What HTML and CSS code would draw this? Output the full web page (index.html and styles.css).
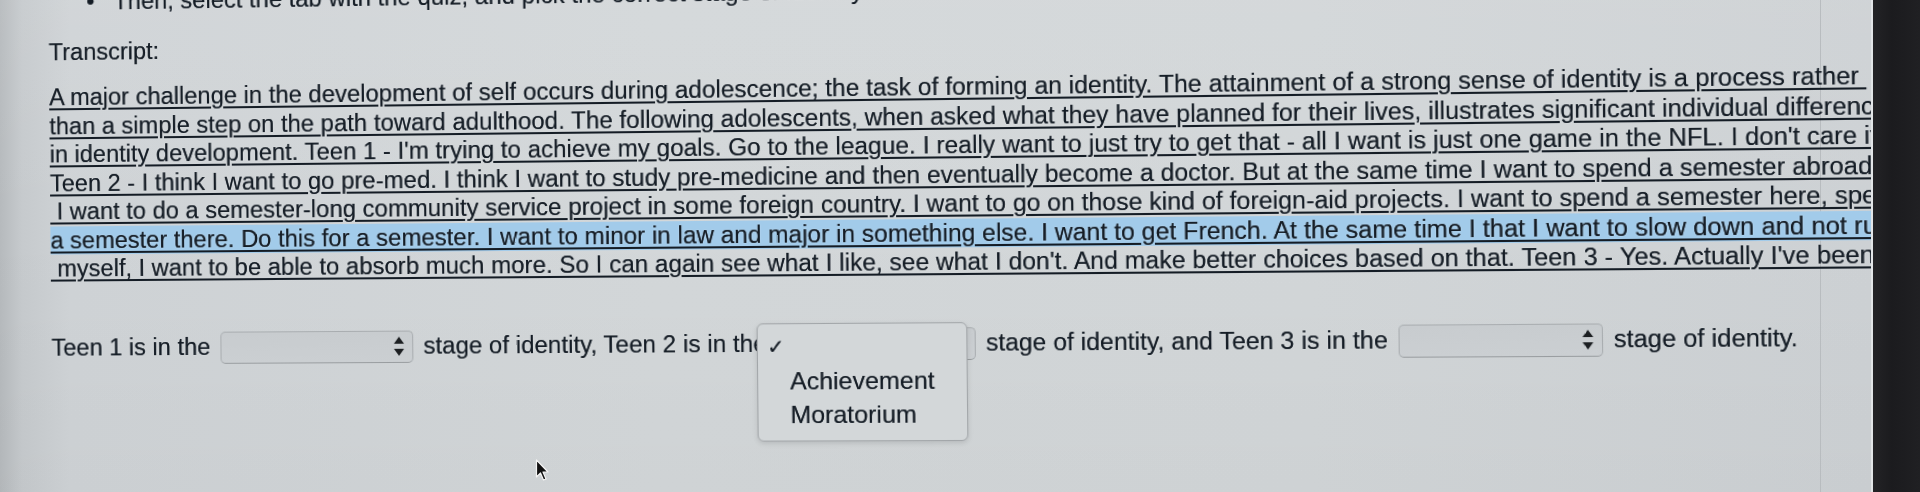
FILE: index.html
```html
<!DOCTYPE html>
<html lang="en">
<head>
<meta charset="utf-8">
<title>Transcript quiz</title>
<link rel="stylesheet" href="styles.css">
</head>
<body>
<div class="screen">
  <div class="page">
    <span class="track-line"></span>
    <div class="content">
      <ul class="steps">
        <li>Then, select the tab with the quiz, and pick the correct stage of identity for each teen.</li>
      </ul>
      <p class="label">Transcript:</p>
      <div class="transcript">
        <div class="line">A major challenge in the development of self occurs during adolescence; the task of forming an identity. The attainment of a strong sense of identity is a process rather </div>
        <div class="line">than a simple step on the path toward adulthood. The following adolescents, when asked what they have planned for their lives, illustrates significant individual differences</div>
        <div class="line">in identity development. Teen 1 - I'm trying to achieve my goals. Go to the league. I really want to just try to get that - all I want is just one game in the NFL. I don't care if</div>
        <div class="line">Teen 2 - I think I want to go pre-med. I think I want to study pre-medicine and then eventually become a doctor. But at the same time I want to spend a semester abroad</div>
        <div class="line"> I want to do a semester-long community service project in some foreign country. I want to go on those kind of foreign-aid projects. I want to spend a semester here, spend</div>
        <div class="line selected">a semester there. Do this for a semester. I want to minor in law and major in something else. I want to get French. At the same time I that I want to slow down and not rush</div>
        <div class="line"> myself, I want to be able to absorb much more. So I can again see what I like, see what I don't. And make better choices based on that. Teen 3 - Yes. Actually I've been</div>
      </div>
      <div class="quiz">
        <span class="txt">Teen 1 is in the</span>
        <span class="select-wrap">
          <span class="select"></span>
          <svg class="arrows" viewBox="0 0 10 22" width="10" height="22"><path d="M5 1 L10 8 L0 8 Z M0 13 L10 13 L5 20 Z" fill="#1c1f22"/></svg>
        </span>
        <span class="txt">stage of identity, Teen 2 is in the</span>
        <span class="select-wrap">
          <span class="select"></span>
          <svg class="arrows" viewBox="0 0 10 22" width="10" height="22"><path d="M5 1 L10 8 L0 8 Z M0 13 L10 13 L5 20 Z" fill="#1c1f22"/></svg>
          <span class="popup">
            <span class="opt"><span class="check">✓</span></span>
            <span class="opt">Achievement</span>
            <span class="opt">Moratorium</span>
          </span>
        </span>
        <span class="txt">stage of identity, and Teen 3 is in the</span>
        <span class="select-wrap">
          <span class="select"></span>
          <svg class="arrows" viewBox="0 0 10 22" width="10" height="22"><path d="M5 1 L10 8 L0 8 Z M0 13 L10 13 L5 20 Z" fill="#1c1f22"/></svg>
        </span>
        <span class="txt">stage of identity.</span>
      </div>
    </div>
    <svg class="cursor" viewBox="0 0 14 23" width="14" height="23"><path d="M1.5 1 L1.5 18 L5.5 14 L8.5 21 L11 20 L8 13 L13 13 Z" fill="#111" stroke="#f4f4f4" stroke-width="1.2" stroke-linejoin="round"/></svg>
  </div>
  <div class="bezel"></div>
</div>
</body>
</html>
```

FILE: styles.css
```css
html, body {
  margin: 0;
  padding: 0;
}
body {
  width: 1920px;
  height: 492px;
  overflow: hidden;
  font-family: "Liberation Sans", Arial, sans-serif;
  color: #141c25;
}
.screen {
  display: flex;
  height: 492px;
}
.page {
  flex: 1;
  position: relative;
  overflow: hidden;
  background:
    linear-gradient(180deg, rgba(255,255,255,0.06) 0, rgba(255,255,255,0) 45%, rgba(0,0,0,0.02) 100%),
    linear-gradient(90deg, #b6babd 0, #c6cacd 22px, #cfd3d6 70px, #d3d7d9 35%, #d2d6d8 70%, #cdd1d4 100%);
}
.track-line {
  position: absolute;
  left: 1820px;
  top: 0;
  bottom: 0;
  width: 1px;
  background: #b8bcbf;
}
.content {
  padding-left: 50px;
  transform: perspective(2000px) rotateY(-2.9deg) rotateZ(-0.55deg);
  transform-origin: 0 200px;
  font-size: 23.5px;
  line-height: 28.5px;
  text-shadow: 0 0 0.6px rgba(20,28,37,0.7), 0 0 1.5px rgba(255,255,255,0.5);
}
.steps {
  margin: -11px 0 0 0;
  padding: 0 0 0 38px;
  list-style: none;
}
.steps li {
  white-space: nowrap;
}
.steps li::before {
  content: "•";
  display: inline-block;
  width: 27px;
}
.label {
  margin: 21px 0 0 0;
}
.transcript {
  margin-top: 17px;
}
.line {
  white-space: pre;
  text-decoration: underline;
  text-decoration-thickness: 1.6px;
  text-underline-offset: 3px;
  margin-right: -400px;
}
.line.selected {
  background: #a2cbea;
}
.quiz {
  margin-top: 48px;
  height: 34px;
  display: flex;
  align-items: center;
  white-space: nowrap;
}
.txt {
  display: inline-block;
}
.select-wrap {
  position: relative;
  display: inline-block;
  width: 190px;
  height: 32px;
  margin: 0 10px 0 10px;
}
.select {
  display: block;
  box-sizing: border-box;
  width: 190px;
  height: 32px;
  border: 1px solid #a9adb0;
  border-bottom-color: #999da0;
  border-radius: 5px;
  background: linear-gradient(180deg, #c8cccf, #cbcfd2);
}
.arrows {
  position: absolute;
  right: 9px;
  top: 5px;
}
.popup {
  position: absolute;
  left: -20px;
  top: -5px;
  width: 202px;
  box-sizing: border-box;
  padding: 6px 0 9px 0;
  display: flex;
  flex-direction: column;
  background: #d3d7d9;
  border: 1px solid #a2a6a9;
  border-radius: 6px;
  box-shadow: 0 2px 5px rgba(0,0,0,0.12);
  font-size: 24px;
  line-height: 33px;
  z-index: 2;
}
.opt {
  display: block;
  height: 33px;
  padding-left: 31px;
  position: relative;
}
.check {
  position: absolute;
  left: 9px;
  top: 0;
  font-size: 20px;
}
.cursor {
  position: absolute;
  left: 535px;
  top: 459px;
}
.bezel {
  width: 47px;
  border-left: 2px solid #e2e5e7;
  background: linear-gradient(90deg, #232326, #1b1b1e 40%, #202023);
}
```
